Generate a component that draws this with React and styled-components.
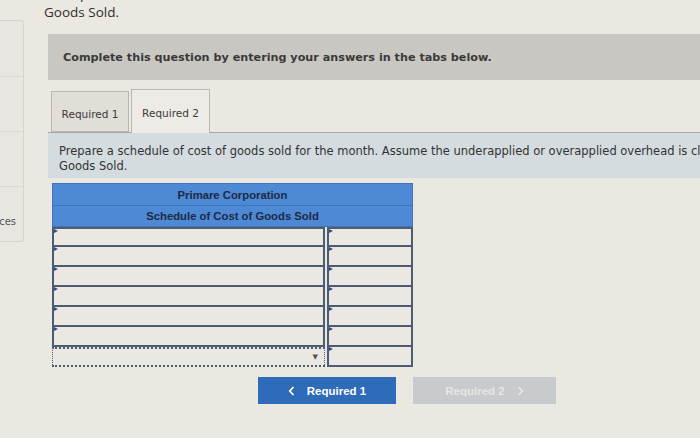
import React from "react";
import styled, { createGlobalStyle } from "styled-components";

const GlobalStyle = createGlobalStyle`
  html, body {
    margin: 0;
    padding: 0;
    background: #ebe8e2;
    overflow: hidden;
    width: 700px;
    height: 438px;
  }
  * { box-sizing: border-box; }
`;

const Page = styled.div`
  display: flex;
  width: 800px;
  font-family: "DejaVu Sans", Verdana, sans-serif;
  color: #333;
`;

const Sidebar = styled.div`
  width: 24px;
  flex-shrink: 0;
  padding-top: 20px;
`;

const SidePanel = styled.div`
  width: 80px;
  margin-left: -56px;
  border: 1px solid #d6d4cf;
  border-radius: 3px;
  background: #e8e6e1;
`;

const SideRow = styled.div`
  height: 55px;
  border-top: ${(p) => (p.first ? "none" : "1px solid #dcdad5")};
  display: flex;
  align-items: flex-end;
  justify-content: flex-end;
  padding: 0 7px 14px 0;
  font-size: 10px;
  color: #555;
`;

const Main = styled.div`
  margin-left: 24px;
  width: 760px;
  display: flex;
  flex-direction: column;
`;

const Title = styled.div`
  margin: -15px 0 0 -4px;
  font-family: "Open Sans", "DejaVu Sans", sans-serif;
  font-size: 13.5px;
  line-height: 18px;
  color: #2e2e2e;
`;

const Banner = styled.div`
  margin-top: 13px;
  height: 46px;
  background: #c9c7c1;
  display: flex;
  align-items: center;
  padding: 1px 0 0 15px;
  font-size: 11.2px;
  font-weight: bold;
  color: #3a3a3a;
`;

const Tabs = styled.div`
  margin-top: 10px;
  display: flex;
  align-items: flex-end;
  height: 43px;
  border-bottom: 1px solid #a9a8a4;
`;

const Tab = styled.div`
  height: ${(p) => (p.active ? "44px" : "41px")};
  margin-bottom: ${(p) => (p.active ? "-1px" : "0")};
  width: ${(p) => (p.active ? "79px" : "78px")};
  margin-left: ${(p) => (p.active ? "2px" : "3px")};
  background: ${(p) => (p.active ? "#eeebe6" : "#e1ded8")};
  border: 1px solid #b9b7b2;
  border-bottom: ${(p) => (p.active ? "none" : "1px solid #b9b7b2")};
  display: flex;
  align-items: center;
  justify-content: center;
  font-size: 10.5px;
  color: #3a3a3a;
  padding-top: ${(p) => (p.active ? "2px" : "4px")};
`;

const Instructions = styled.div`
  background: #d4dcdf;
  padding: 11px 0 4px 11px;
  font-size: 11.5px;
  line-height: 15px;
  color: #333;
`;

const Table = styled.div`
  margin: 5px 0 0 4px;
  width: 361px;
  display: flex;
  flex-direction: column;
`;

const HeadRow = styled.div`
  height: ${(p) => p.h}px;
  background: #4d89d4;
  border: 1px solid #3f74b8;
  border-top: ${(p) => (p.first ? "1px solid #3f74b8" : "none")};
  display: flex;
  align-items: center;
  justify-content: center;
  font-family: "Liberation Sans", Arial, sans-serif;
  font-weight: bold;
  font-size: 11.3px;
  color: #1d2a44;
`;

const DataRow = styled.div`
  display: grid;
  grid-template-columns: 273px 86px;
  column-gap: 2px;
  height: 20px;
`;

const Cell = styled.div`
  position: relative;
  background: #ebe8e3;
  border: 2px solid #4d5c70;
  border-top-width: ${(p) => (p.top ? "2px" : "0")};
  &::before {
    content: "";
    position: absolute;
    left: 0;
    top: 0;
    border-left: 4px solid #2d4f86;
    border-top: 2px solid transparent;
    border-bottom: 2px solid transparent;
  }
`;

const SelectCell = styled.div`
  display: flex;
  justify-content: flex-end;
  align-items: center;
  background: #ebe8e3;
  border: 1px dotted #4d5c70;
  border-width: 2px 1px 2px 1px;
  padding-right: 6px;
  color: #555;
  font-size: 7px;
`;

const Buttons = styled.div`
  margin: 10px 0 0 210px;
  display: flex;
  gap: 17px;
`;

const NavButton = styled.div`
  width: ${(p) => (p.disabled ? "143px" : "138px")};
  height: 27px;
  display: flex;
  align-items: center;
  justify-content: center;
  gap: 12px;
  background: ${(p) => (p.disabled ? "#c7cbce" : "#2e6bb8")};
  color: ${(p) => (p.disabled ? "#e6e6e4" : "#ffffff")};
  font-family: "Liberation Sans", Arial, sans-serif;
  font-weight: bold;
  font-size: 11.5px;
`;

const Chevron = ({ dir }) => (
  <svg width="7" height="10" viewBox="0 0 7 10">
    <path
      d={dir === "left" ? "M5.5 1 L1.8 5 L5.5 9" : "M1.5 1 L5.2 5 L1.5 9"}
      fill="none"
      stroke="currentColor"
      strokeWidth="1.8"
    />
  </svg>
);

const rows = [0, 1, 2, 3, 4, 5];

export default function App() {
  return (
    <Page>
      <GlobalStyle />
      <Sidebar>
        <SidePanel>
          <SideRow first />
          <SideRow />
          <SideRow />
          <SideRow>References</SideRow>
        </SidePanel>
      </Sidebar>
      <Main>
        <Title>
          2. Prepare a schedule of Cost of
          <br />
          Goods Sold.
        </Title>
        <Banner>Complete this question by entering your answers in the tabs below.</Banner>
        <Tabs>
          <Tab>Required 1</Tab>
          <Tab active>Required 2</Tab>
        </Tabs>
        <Instructions>
          Prepare a schedule of cost of goods sold for the month. Assume the underapplied or overapplied overhead is closed to Cost of
          Goods Sold.
        </Instructions>
        <Table>
          <HeadRow first h={23}>Primare Corporation</HeadRow>
          <HeadRow h={21}>Schedule of Cost of Goods Sold</HeadRow>
          {rows.map((r) => (
            <DataRow key={r}>
              <Cell top={r === 0} />
              <Cell top={r === 0} />
            </DataRow>
          ))}
          <DataRow>
            <SelectCell>▼</SelectCell>
            <Cell />
          </DataRow>
        </Table>
        <Buttons>
          <NavButton>
            <Chevron dir="left" />
            Required 1
          </NavButton>
          <NavButton disabled>
            Required 2
            <Chevron dir="right" />
          </NavButton>
        </Buttons>
      </Main>
    </Page>
  );
}
